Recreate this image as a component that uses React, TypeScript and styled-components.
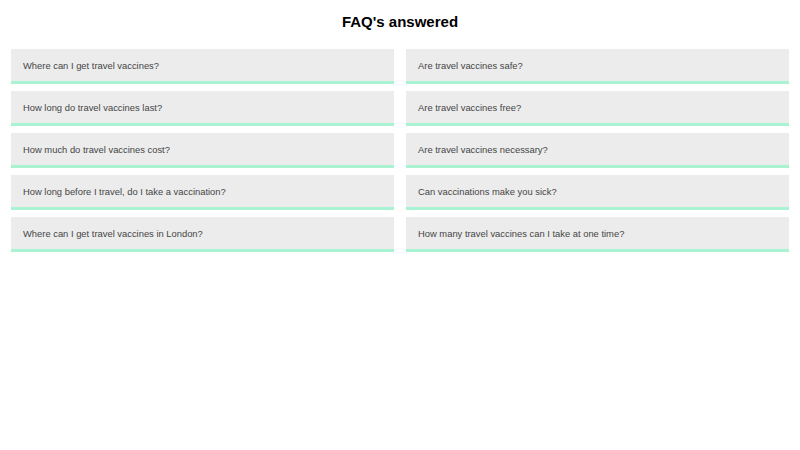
import styled, { createGlobalStyle } from 'styled-components';

const GlobalStyle = createGlobalStyle`
  html, body {
    margin: 0;
    padding: 0;
    background: #ffffff;
    font-family: "Liberation Sans", Arial, sans-serif;
  }
`;

const Page = styled.main`
  padding: 0 11px;
`;

const Title = styled.h1`
  margin: 0 0 18px;
  padding-top: 13px;
  font-size: 15px;
  line-height: 18px;
  font-weight: 700;
  color: #000;
  text-align: center;
`;

const Grid = styled.div`
  display: grid;
  grid-template-columns: 1fr 1fr;
  column-gap: 12px;
  row-gap: 7px;
`;

const Question = styled.div`
  display: flex;
  align-items: center;
  height: 32px;
  padding: 0 12px;
  background: #ececec;
  border-bottom: 3px solid #a9f2d2;
  color: #454545;
  font-size: 9.4px;
  cursor: pointer;
`;

const questions = [
  'Where can I get travel vaccines?',
  'Are travel vaccines safe?',
  'How long do travel vaccines last?',
  'Are travel vaccines free?',
  'How much do travel vaccines cost?',
  'Are travel vaccines necessary?',
  'How long before I travel, do I take a vaccination?',
  'Can vaccinations make you sick?',
  'Where can I get travel vaccines in London?',
  'How many travel vaccines can I take at one time?',
];

export default function App() {
  return (
    <>
      <GlobalStyle />
      <Page>
        <Title>FAQ's answered</Title>
        <Grid>
          {questions.map(q => (
            <Question key={q}>{q}</Question>
          ))}
        </Grid>
      </Page>
    </>
  );
}
